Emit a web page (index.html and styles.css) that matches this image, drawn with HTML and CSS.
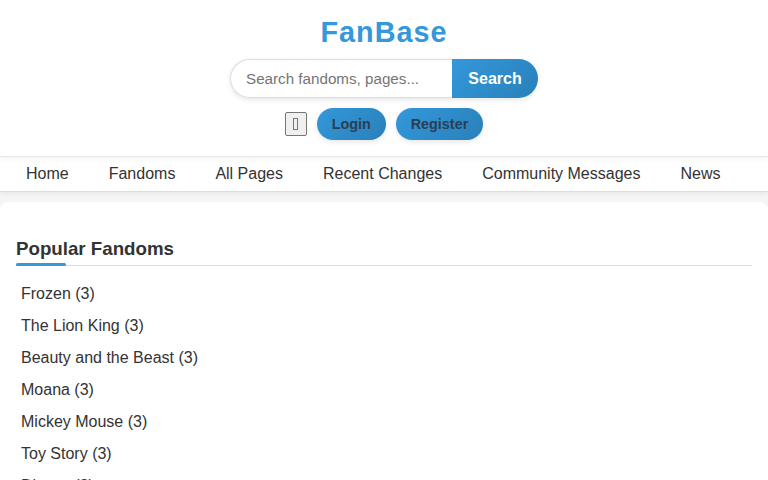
FILE: index.html
```html
<!DOCTYPE html>
<html lang="en">
<head>
    <meta charset="UTF-8">
    <meta name="viewport" content="width=device-width, initial-scale=1.0">
    <title>FanBase</title>
    <link rel="stylesheet" href="styles.css">
</head>
<body>
    <header class="site-header">
        <h1 class="logo">FanBase</h1>
        <form class="search-form">
            <input class="search-input" type="text" placeholder="Search fandoms, pages...">
            <button class="search-button" type="submit">Search</button>
        </form>
        <div class="user-actions">
            <button class="theme-toggle" type="button" aria-label="Toggle theme"><span class="missing-glyph"></span></button>
            <a class="action-button" href="#">Login</a>
            <a class="action-button" href="#">Register</a>
        </div>
    </header>

    <nav class="main-nav">
        <a href="#">Home</a>
        <a href="#">Fandoms</a>
        <a href="#">All Pages</a>
        <a href="#">Recent Changes</a>
        <a href="#">Community Messages</a>
        <a href="#">News</a>
    </nav>

    <main class="content">
        <h2 class="section-title">Popular Fandoms</h2>
        <ul class="fandom-list">
            <li><a href="#">Frozen (3)</a></li>
            <li><a href="#">The Lion King (3)</a></li>
            <li><a href="#">Beauty and the Beast (3)</a></li>
            <li><a href="#">Moana (3)</a></li>
            <li><a href="#">Mickey Mouse (3)</a></li>
            <li><a href="#">Toy Story (3)</a></li>
            <li><a href="#">Disney (3)</a></li>
        </ul>
    </main>
</body>
</html>
```
FILE: styles.css
```css
html, body {
    height: 100%;
    overflow: hidden;
}
body {
    font-family: "Liberation Sans", Arial, sans-serif;
    background: #f5f5f5;
    color: #333;
    margin: 0;
}
.site-header {
    background: #fff;
    height: 157px;
    box-sizing: border-box;
    padding-top: 16px;
    display: flex;
    flex-direction: column;
    align-items: center;
    border-bottom: 1px solid #e8e8e8;
    box-shadow: 0 2px 5px rgba(0, 0, 0, 0.05);
    position: relative;
}
.logo {
    margin: 0 0 10px;
    font-size: 28.8px;
    line-height: 33px;
    font-weight: 700;
    letter-spacing: 1px;
    color: #3498db;
}
.search-form {
    display: flex;
    width: 308px;
    height: 39px;
    margin-bottom: 10px;
    border-radius: 20px;
    box-shadow: 0 2px 5px rgba(0, 0, 0, 0.1);
}
.search-input {
    flex: 1;
    min-width: 0;
    padding: 0 15px;
    border: 1px solid #ddd;
    border-right: none;
    border-radius: 20px 0 0 20px;
    font-family: inherit;
    font-size: 15.2px;
    color: #333;
    background: #fff;
    outline: none;
}
.search-button {
    width: 86px;
    border: none;
    border-radius: 0 20px 20px 0;
    background: linear-gradient(135deg, #3498db, #2980b9);
    color: #fff;
    font-family: inherit;
    font-size: 16px;
    font-weight: 700;
    cursor: pointer;
}
.user-actions {
    display: flex;
    align-items: center;
    gap: 10px;
}
.theme-toggle {
    width: 22px;
    height: 24px;
    padding: 0;
    display: flex;
    align-items: center;
    justify-content: center;
    border: 1px solid #767676;
    border-radius: 2px;
    background: #f0f0f0;
    cursor: pointer;
}
.missing-glyph {
    width: 3px;
    height: 10px;
    border: 1px solid #777;
}
.action-button {
    height: 32px;
    padding: 0 14.9px;
    display: flex;
    align-items: center;
    border-radius: 16px;
    background: linear-gradient(135deg, #3498db, #2980b9);
    color: #2c3e50;
    font-size: 14.4px;
    font-weight: 700;
    text-decoration: none;
    box-shadow: 0 2px 5px rgba(0, 0, 0, 0.1);
}
.main-nav {
    background: #fff;
    height: 35px;
    box-sizing: border-box;
    padding-left: 6px;
    display: flex;
    align-items: center;
    border-bottom: 1px solid #ddd;
    box-shadow: 0 2px 5px rgba(0, 0, 0, 0.05);
}
.main-nav a {
    padding: 0 20px;
    color: #333;
    font-size: 16px;
    text-decoration: none;
}
.content {
    background: #fff;
    margin-top: 10px;
    padding: 36px 16px 0;
    border-radius: 8px 8px 0 0;
    height: 300px;
    box-sizing: border-box;
}
.section-title {
    margin: 0 0 12px;
    padding-bottom: 6px;
    font-size: 18.72px;
    line-height: 21px;
    font-weight: 700;
    color: #333;
    border-bottom: 1px solid #ddd;
    position: relative;
}
.section-title::after {
    content: "";
    position: absolute;
    left: 0;
    bottom: -1px;
    width: 50px;
    height: 3px;
    background: #3498db;
    border-radius: 2px;
}
.fandom-list {
    list-style: none;
    margin: 0;
    padding: 0;
}
.fandom-list li {
    padding: 5px;
    line-height: 22px;
}
.fandom-list a {
    color: #333;
    font-size: 16px;
    text-decoration: none;
}
```
